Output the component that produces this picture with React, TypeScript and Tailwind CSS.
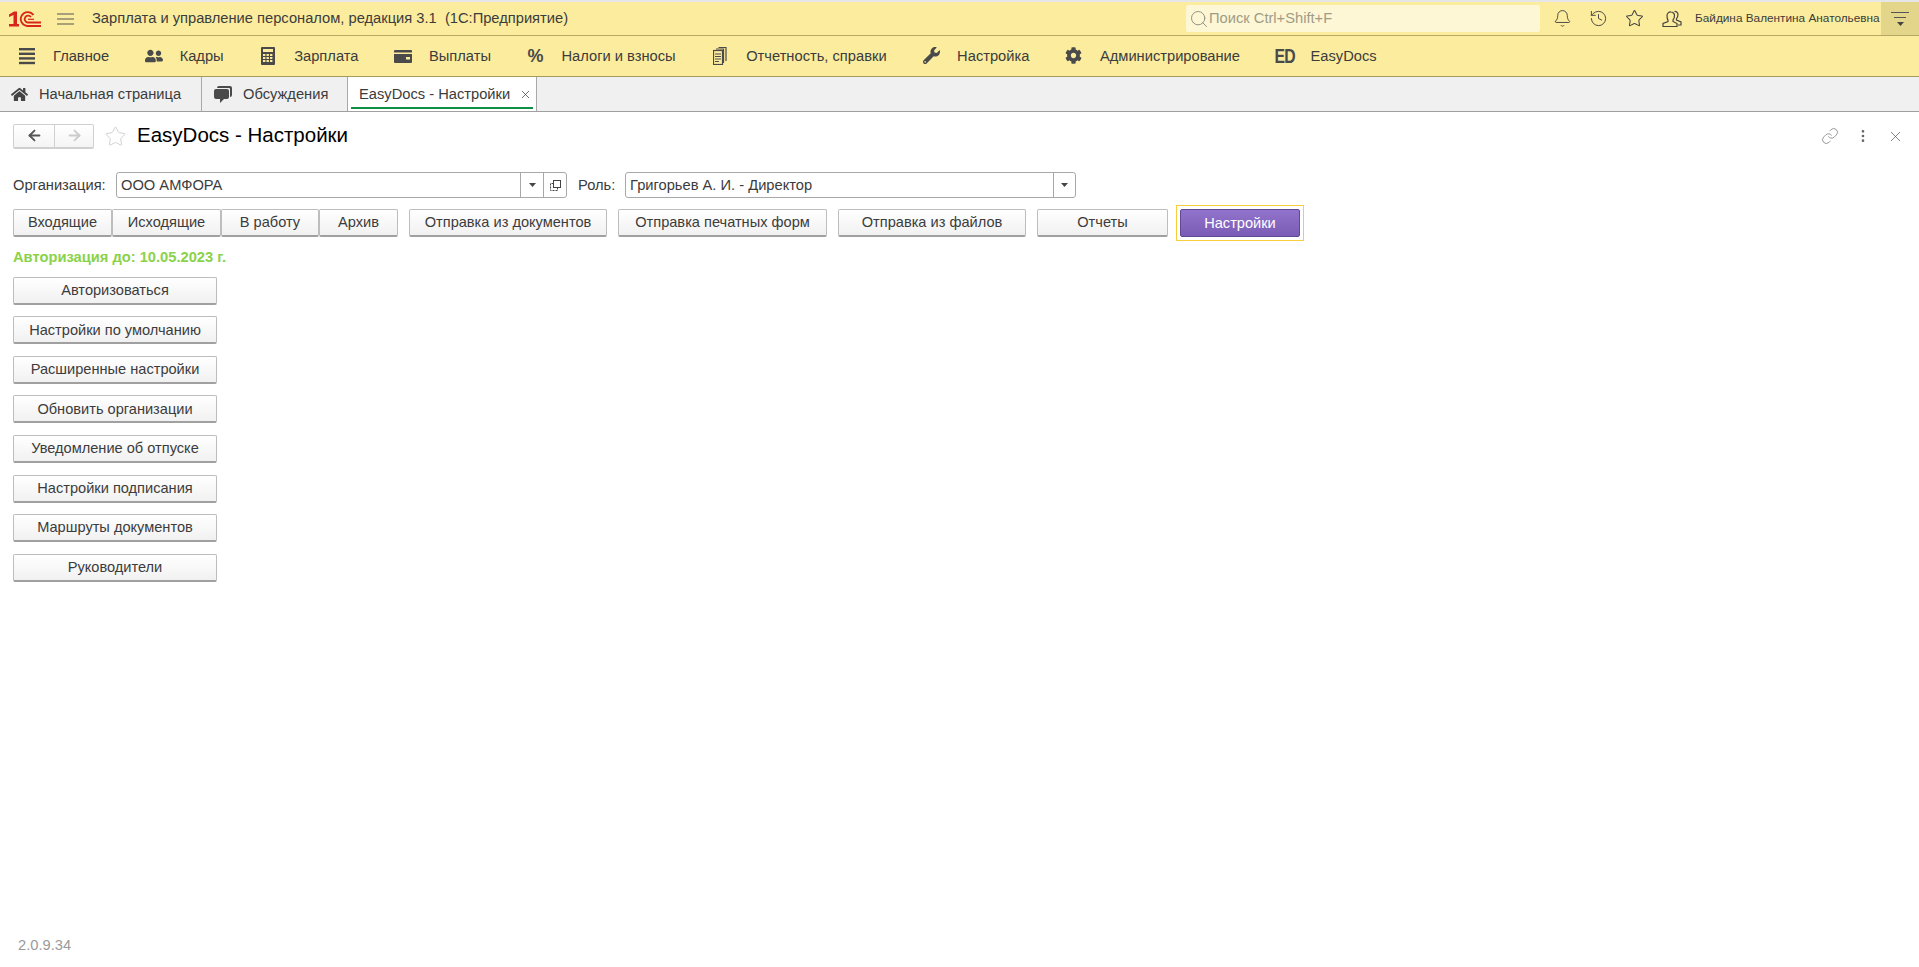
import { Bell, History, Star, Link, MoreVertical, X, Search, ArrowLeft, ArrowRight } from 'lucide-react';
import { FaHome, FaWrench, FaCog, FaUserFriends } from 'react-icons/fa';

const btn =
  'h-[28px] shrink-0 rounded-[2px] border border-[#bdbdbd] border-b-[2px] border-b-[#a0a0a0] bg-gradient-to-b from-white to-[#f1f1f1] text-[14.6px] leading-none text-[#3c3c3c]';

function Logo1C() {
  return (
    <svg width="33" height="16" viewBox="0 0 33 16" fill="none" className="shrink-0">
      <path d="M1 3.500 L6 0.500 H9 V13 H11 V15.500 H1 V13 H5.500 V4 L1 6 Z" fill="#d9261c" />
      <path d="M25.500 4 A7 7 0 1 0 19 15 H33" stroke="#d9261c" strokeWidth="1.800" />
      <path d="M23 6 A3.500 3.500 0 1 0 19.500 11.500 H33" stroke="#d9261c" strokeWidth="1.800" />
      <path d="M20 8.300 H26" stroke="#d9261c" strokeWidth="1.200" />
    </svg>
  );
}

function MenuBars() {
  return (
    <svg width="16" height="18" viewBox="0 0 16 18" fill="#4a4a4a">
      <rect y="1" width="16" height="2.400" />
      <rect y="5.600" width="16" height="2.400" />
      <rect y="10.200" width="16" height="2.400" />
      <rect y="14.800" width="16" height="2.400" />
    </svg>
  );
}

function Calculator() {
  return (
    <svg width="14" height="18" viewBox="0 0 14 18" fill="#4a4a4a">
      <path d="M0 1 a1 1 0 0 1 1 -1 H13 a1 1 0 0 1 1 1 V17 a1 1 0 0 1 -1 1 H1 a1 1 0 0 1 -1 -1 Z M2 2 V5 H12 V2 Z" fillRule="evenodd" />
      {[7, 10, 13].map(y =>
        [2, 5.500, 9].map(x => <rect key={`${x}-${y}`} x={x} y={y} width="2.400" height="2" fill="#fbec9e" />),
      )}
    </svg>
  );
}

function Wallet() {
  return (
    <svg width="18" height="14" viewBox="0 0 18 14" fill="#4a4a4a">
      <path d="M0 2 a1 1 0 0 1 1 -1 H17 a1 1 0 0 1 1 1 V3.500 H0 Z" />
      <path d="M0 5 H18 V13 a1 1 0 0 1 -1 1 H1 a1 1 0 0 1 -1 -1 Z M12 8 V10.500 H16 V8 Z" fillRule="evenodd" />
    </svg>
  );
}

function Reports() {
  return (
    <svg width="14" height="18" viewBox="0 0 14 18" fill="none" stroke="#4a4a4a">
      <rect x="0.500" y="3.500" width="9" height="14" fill="#fbec9e" strokeWidth="1.200" />
      <path d="M2 7 H8 M2 9.500 H8 M2 12 H8 M2 14.500 H6" strokeWidth="1.200" />
      <path d="M10.500 16 V2 H3 M13 14 V0.500 H5.500" strokeWidth="1.200" />
    </svg>
  );
}

function Chat() {
  return (
    <svg width="18" height="18" viewBox="0 0 18 18" fill="#4a4a4a">
      <path d="M5 1 H16 a2 2 0 0 1 2 2 V10 a2 2 0 0 1 -2 2 V4 a1 1 0 0 0 -1 -1 H3 a2 2 0 0 1 2 -2 Z" />
      <path d="M2 4 H13 a2 2 0 0 1 2 2 V12 a2 2 0 0 1 -2 2 H10 L6 18 V14 H2 a2 2 0 0 1 -2 -2 V6 a2 2 0 0 1 2 -2 Z" />
    </svg>
  );
}

function Users() {
  return (
    <svg width="20" height="18" viewBox="0 0 20 18" fill="none" stroke="#444" strokeWidth="1.200">
      <path d="M9 2 a3.500 3.500 0 0 1 3.500 3.500 C12.500 8 11.500 9.500 11 10 V11.500 L15 13.500 V16.500 H1 V13.500 L6 11.500 V10 C5.500 9.500 5 8 5 5.500 A3.500 3.500 0 0 1 9 2 Z" />
      <path d="M12.500 1.500 a3 3 0 0 1 3.500 3 C16 7 15 8 14.500 8.500 V10 L19 12 V15 H16" />
    </svg>
  );
}

function Caret() {
  return (
    <svg width="7" height="4" viewBox="0 0 7 4" fill="#444">
      <path d="M0 0 H7 L3.500 4 Z" />
    </svg>
  );
}

const menu = [
  { label: 'Главное', icon: <MenuBars /> },
  { label: 'Кадры', icon: <FaUserFriends size={20} color="#4a4a4a" /> },
  { label: 'Зарплата', icon: <Calculator /> },
  { label: 'Выплаты', icon: <Wallet /> },
  { label: 'Налоги и взносы', icon: <span className="text-[18px] font-bold leading-none text-[#4a4a4a]">%</span> },
  { label: 'Отчетность, справки', icon: <Reports /> },
  { label: 'Настройка', icon: <FaWrench size={17} color="#4a4a4a" /> },
  { label: 'Администрирование', icon: <FaCog size={17} color="#4a4a4a" /> },
  {
    label: 'EasyDocs',
    icon: <span className="scale-x-75 text-[21px] font-bold leading-none tracking-[-1px] text-[#4a4a4a]">ED</span>,
  },
];

const topButtons = [
  { label: 'Входящие', cls: 'w-[99px]' },
  { label: 'Исходящие', cls: 'w-[109px]' },
  { label: 'В работу', cls: 'w-[98px]' },
  { label: 'Архив', cls: 'w-[79px] mr-[11px]' },
  { label: 'Отправка из документов', cls: 'w-[198px] mr-[11px]' },
  { label: 'Отправка печатных форм', cls: 'w-[209px] mr-[11px]' },
  { label: 'Отправка из файлов', cls: 'w-[188px] mr-[11px]' },
  { label: 'Отчеты', cls: 'w-[131px] mr-[8px]' },
];

const settingsButtons = [
  'Авторизоваться',
  'Настройки по умолчанию',
  'Расширенные настройки',
  'Обновить организации',
  'Уведомление об отпуске',
  'Настройки подписания',
  'Маршруты документов',
  'Руководители',
];

export default function App() {
  return (
    <div className="flex h-[967px] flex-col overflow-hidden bg-white font-['Liberation_Sans',Arial,sans-serif] text-[14.7px] text-[#3c3c3c]">
      {/* Title bar */}
      <div className="flex h-[36px] shrink-0 items-center border-t-[2px] border-b border-t-[#e6e6e6] border-b-[#b5a862] bg-[#fbec9e] pl-[8px]">
        <Logo1C />
        <svg width="17" height="12" viewBox="0 0 17 12" stroke="#555" strokeWidth="1.200" className="ml-[16px] shrink-0">
          <path d="M0 1 H17 M0 6 H17 M0 11 H17" />
        </svg>
        <span className="ml-[18px] flex-1 whitespace-pre">Зарплата и управление персоналом, редакция 3.1  (1С:Предприятие)</span>
        <div className="flex h-[27px] w-[354px] items-center rounded-[2px] bg-[#fdf7d6] pl-[3px] text-[#a09c86]">
          <Search size={20} strokeWidth={1.100} color="#8a8a7a" />
          <span className="whitespace-nowrap">Поиск Ctrl+Shift+F</span>
        </div>
        <div className="ml-[13px] flex items-center gap-[17px]">
          <Bell size={19} strokeWidth={1.200} color="#444" />
          <History size={19} strokeWidth={1.200} color="#444" />
          <Star size={19} strokeWidth={1.300} color="#444" />
        </div>
        <div className="ml-[18px]">
          <Users />
        </div>
        <span className="ml-[13px] w-[186px] whitespace-nowrap text-[11.8px]">Байдина Валентина Анатольевна</span>
        <div className="flex h-full w-[38px] shrink-0 flex-col items-center justify-center gap-[4px] bg-[#e3d68a]">
          <div className="h-[1px] w-[18px] bg-[#555]" />
          <div className="h-[1px] w-[12px] bg-[#555]" />
          <Caret />
        </div>
      </div>

      {/* Sections menu */}
      <div className="flex h-[41px] shrink-0 items-center gap-[35.5px] border-b border-b-[#a39a5c] bg-[#fbec9e] pl-[18px]">
        {menu.map(item => (
          <div key={item.label} className="flex items-center gap-[17px]">
            <div className="flex w-[18px] shrink-0 items-center justify-center">{item.icon}</div>
            <span className="whitespace-nowrap pt-[1px]">{item.label}</span>
          </div>
        ))}
      </div>

      {/* Open windows */}
      <div className="flex h-[35px] shrink-0 border-b border-b-[#a0a0a0] bg-[#f0f0f0]">
        <div className="flex w-[202px] items-center border-r border-r-[#a8a8a8] pl-[11px]">
          <FaHome size={17} color="#444" />
          <span className="ml-[11px] whitespace-nowrap">Начальная страница</span>
        </div>
        <div className="flex w-[146px] items-center border-r border-r-[#a8a8a8] pl-[12px]">
          <Chat />
          <span className="ml-[11px] whitespace-nowrap">Обсуждения</span>
        </div>
        <div className="relative flex w-[189px] items-center border-r border-r-[#a8a8a8] bg-white pl-[11px]">
          <span className="whitespace-nowrap">EasyDocs - Настройки</span>
          <X size={13} strokeWidth={1.400} color="#444" className="ml-[9px]" />
          <div className="absolute bottom-[2px] left-[3px] right-[3px] h-[2px] bg-[#0f8f45]" />
        </div>
      </div>

      {/* Form */}
      <div className="flex min-h-0 flex-1 flex-col px-[13px]">
        <div className="mt-[11px] flex h-[26px] shrink-0 items-center">
          <div className="flex h-[25px] w-[81px] overflow-hidden rounded-[2px] border border-[#d0d0d0] border-b-[2px] bg-gradient-to-b from-white to-[#f4f4f4]">
            <div className="flex w-[41px] items-center justify-center border-r border-r-[#d0d0d0]">
              <ArrowLeft size={17} strokeWidth={2.600} color="#555" />
            </div>
            <div className="flex flex-1 items-center justify-center">
              <ArrowRight size={17} strokeWidth={2.600} color="#ccc" />
            </div>
          </div>
          <Star size={23} strokeWidth={1} color="#cfcfcf" className="ml-[10px]" />
          <span className="ml-[10px] mb-[2px] whitespace-nowrap text-[20.500px] leading-none text-black">EasyDocs - Настройки</span>
          <div className="ml-auto flex items-center gap-[16px]">
            <Link size={18} strokeWidth={1} color="#777" />
            <MoreVertical size={16} strokeWidth={2} color="#666" />
            <X size={17} strokeWidth={1} color="#555" className="mr-[2px]" />
          </div>
        </div>

        <div className="mt-[23px] flex h-[26px] shrink-0 items-center">
          <span className="w-[103px] whitespace-nowrap pt-[1px]">Организация:</span>
          <div className="flex h-full w-[451px] items-center rounded-[3px] border border-[#a8a8a8]">
            <span className="flex-1 pl-[4px] pt-[1px]">ООО АМФОРА</span>
            <div className="flex h-full w-[23px] items-center justify-center border-l border-l-[#a8a8a8]">
              <Caret />
            </div>
            <div className="flex h-full w-[23px] items-center justify-center border-l border-l-[#a8a8a8]">
              <svg width="11" height="11" viewBox="0 0 11 11" fill="none" stroke="#444">
                <rect x="3.500" y="0.500" width="7" height="7" />
                <path d="M3.500 3.500 H0.500 V10.500 H7.500 V7.500" strokeDasharray="2 1" />
              </svg>
            </div>
          </div>
          <span className="ml-[11px] w-[47px] pt-[1px]">Роль:</span>
          <div className="flex h-full w-[451px] items-center rounded-[3px] border border-[#a8a8a8]">
            <span className="flex-1 pl-[4px] pt-[1px]">Григорьев А. И. - Директор</span>
            <div className="flex h-full w-[22px] items-center justify-center border-l border-l-[#a8a8a8]">
              <Caret />
            </div>
          </div>
        </div>

        <div className="mt-[7px] flex shrink-0 items-center">
          {topButtons.map(b => (
            <button key={b.label} className={`${btn} ${b.cls}`}>
              {b.label}
            </button>
          ))}
          <div className="border border-[#f8cf3a] p-[3px]">
            <button className="block h-[28px] w-[120px] rounded-[2px] border border-[#5f4a96] bg-gradient-to-b from-[#9273cb] to-[#7a5cb6] text-[14.6px] leading-none text-white">
              Настройки
            </button>
          </div>
        </div>

        <div className="mt-[9px] shrink-0 text-[14.7px] font-bold leading-none text-[#8ad24a]">Авторизация до: 10.05.2023 г.</div>

        <div className="mt-[12px] flex w-[204px] shrink-0 flex-col gap-[11.600px]">
          {settingsButtons.map(label => (
            <button key={label} className={btn}>
              {label}
            </button>
          ))}
        </div>

        <div className="mt-auto mb-[14px] pl-[5px] text-[14.7px] leading-none text-[#9a9a9a]">2.0.9.34</div>
      </div>
    </div>
  );
}
